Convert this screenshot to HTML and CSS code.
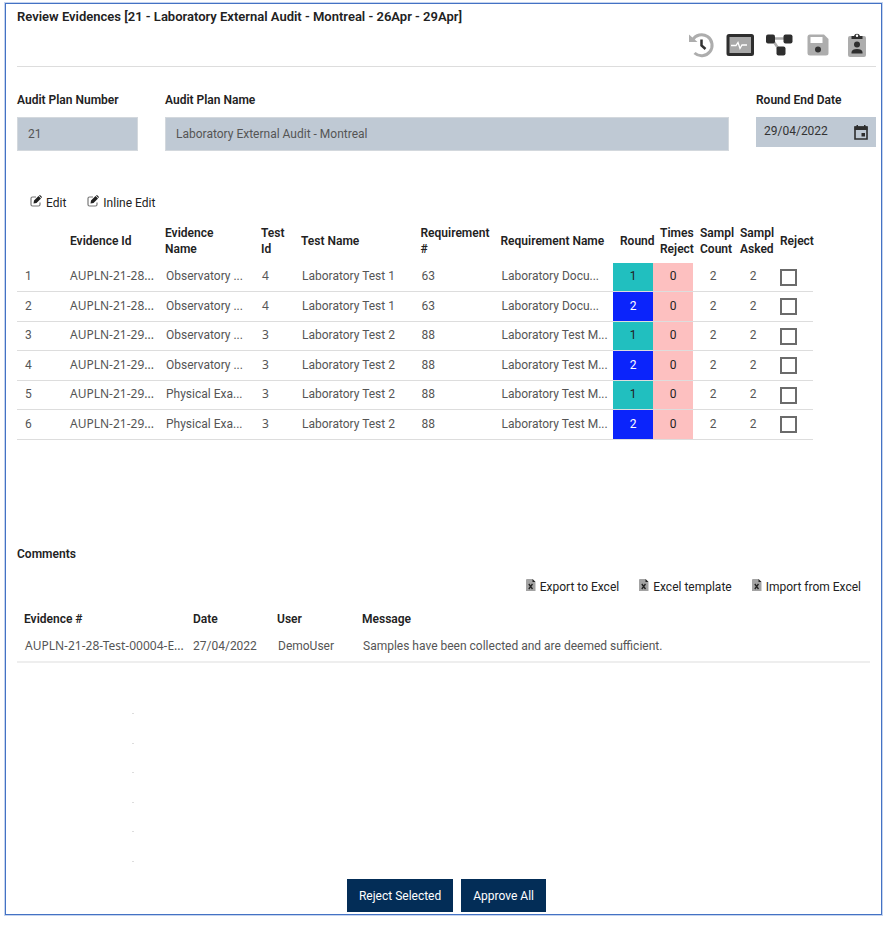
FILE: index.html
```
<!DOCTYPE html>
<html lang="en">
<head>
  <meta charset="UTF-8" />
  <meta name="viewport" content="width=device-width, initial-scale=1" />
  <title>Review Evidences</title>
  <link rel="stylesheet" href="styles.css">
</head>
<body>

  <!-- Shared icons -->
  <svg class="sprite" aria-hidden="true">
    <symbol id="icon-edit" viewBox="0 0 12 12">
      <path d="M6 2H2.5Q1 2 1 3.500V9.500Q1 11 2.500 11H8.500Q10 11 10 9.500V7.500" fill="none" stroke="#777" stroke-width="1.200" />
      <path d="M3.500 8.500L4 5.500L8.500 1L11 3.500L6.500 8Z M9 .5L10 0L12 2L11.500 3Z" fill="#222" />
    </symbol>
    <symbol id="icon-excel" viewBox="0 0 10 12">
      <path d="M1 0H6.500L9.500 3V12H0V1Q0 0 1 0Z" fill="#a3a3a3" />
      <path d="M6.500 0L9.500 3H6.500Z" fill="#222" />
      <path d="M2.800 5L6.500 10M6.500 5L2.800 10" stroke="#222" stroke-width="1.300" />
    </symbol>
  </svg>

  <main class="page">
    <header class="page-header">
      <h1>Review Evidences [21 - Laboratory External Audit - Montreal - 26Apr - 29Apr]</h1>
      <div class="header-actions">
        <button type="button" aria-label="History">
          <svg viewBox="0 0 28 28">
            <path d="M5.500 9A10.500 10.500 0 1 1 7.500 22" fill="none" stroke="#adadad" stroke-width="3" />
            <path d="M2 3.500V11H10.500Z" fill="#adadad" />
            <path d="M14.500 8.500V14.500L18.500 18" fill="none" stroke="#333" stroke-width="2.500" />
          </svg>
        </button>
        <button type="button" aria-label="Monitor">
          <svg viewBox="0 0 28 28">
            <rect x="2" y="4.500" width="24.500" height="19" rx="1" fill="#a8a8a8" stroke="#2e2e2e" stroke-width="3" />
            <path d="M5 14.500H10L12 11.500L14 17.500L16 14H21" fill="none" stroke="#fff" stroke-width="1.300" />
          </svg>
        </button>
        <button type="button" aria-label="Workflow">
          <svg viewBox="0 0 28 28">
            <path d="M5 7.500H23M7 8L15 20" fill="none" stroke="#adadad" stroke-width="2.500" />
            <rect x="1" y="3.500" width="9" height="9" rx="2" fill="#2e2e2e" />
            <rect x="18.500" y="3.500" width="9" height="9" rx="2" fill="#2e2e2e" />
            <rect x="11.500" y="15.500" width="9" height="9" rx="2" fill="#2e2e2e" />
          </svg>
        </button>
        <button type="button" aria-label="Save">
          <svg viewBox="0 0 28 28">
            <path d="M6 3.500H20L24.500 8V22Q24.500 24.500 22 24.500H6Q3.500 24.500 3.500 22V6Q3.500 3.500 6 3.500Z" fill="#adadad" />
            <rect x="6.500" y="6" width="12" height="6" fill="#fff" />
            <circle cx="14" cy="18.500" r="3" fill="#333" />
          </svg>
        </button>
        <button type="button" aria-label="Assignment">
          <svg viewBox="0 0 28 28">
            <rect x="5" y="5" width="18" height="21" rx="2" fill="#adadad" />
            <path d="M8.500 8V5H11A3.100 3.100 0 0 1 17 5H19.500V8Z" fill="#2e2e2e" />
            <circle cx="14" cy="4.700" r="1.200" fill="#fff" />
            <circle cx="14" cy="13.500" r="3" fill="#2e2e2e" />
            <path d="M8.500 22.500V21Q9 18 14 18T19.500 21V22.500Z" fill="#2e2e2e" />
          </svg>
        </button>
      </div>
    </header>

    <form class="plan-form">
      <div class="form-group">
        <label for="plan-number">Audit Plan Number</label>
        <input type="text" id="plan-number" value="21" readonly />
      </div>
      <div class="form-group">
        <label for="plan-name">Audit Plan Name</label>
        <input type="text" id="plan-name" value="Laboratory External Audit - Montreal" readonly />
      </div>
      <div class="form-group">
        <label for="end-date">Round End Date</label>
        <div class="date-field">
          <input type="text" id="end-date" value="29/04/2022" readonly />
          <svg viewBox="0 0 14 15">
            <path d="M1 2H13V14H1Z" fill="none" stroke="#2e2e2e" stroke-width="1.600" />
            <path d="M.5 1.500H13.500V5H.5Z M2.500 0H4V2H2.500Z M10 0H11.500V2H10Z M7.500 8H11V11.500H7.500Z" fill="#2e2e2e" />
          </svg>
        </div>
      </div>
    </form>

    <div class="toolbar">
      <button type="button"><svg viewBox="0 0 12 12"><use href="#icon-edit" /></svg>Edit</button>
      <button type="button"><svg viewBox="0 0 12 12"><use href="#icon-edit" /></svg>Inline Edit</button>
    </div>

    <div class="evidence-list">
      <table class="evidences">
        <colgroup>
          <col class="col-index"><col class="col-evidence"><col class="col-evidence"><col class="col-small"><col><col class="col-req"><col>
          <col class="col-small"><col class="col-small"><col class="col-small"><col class="col-small"><col class="col-small">
        </colgroup>
        <thead>
          <tr>
            <th></th>
            <th>Evidence Id</th>
            <th>Evidence<br>Name</th>
            <th>Test<br>Id</th>
            <th>Test Name</th>
            <th>Requirement<br>#</th>
            <th>Requirement Name</th>
            <th>Round</th>
            <th>Times<br>Reject</th>
            <th>Sampl<br>Count</th>
            <th>Sampl<br>Asked</th>
            <th>Reject</th>
          </tr>
        </thead>
        <tbody>
          <tr><td>1</td><td class="code">AUPLN-21-28...</td><td>Observatory ...</td><td class="code">4</td><td>Laboratory Test 1</td><td>63</td><td>Laboratory Docu...</td><td class="round-1">1</td><td class="rejected">0</td><td class="num">2</td><td class="num">2</td><td class="check"><input type="checkbox" aria-label="Reject row 1" /></td></tr>
          <tr><td>2</td><td class="code">AUPLN-21-28...</td><td>Observatory ...</td><td class="code">4</td><td>Laboratory Test 1</td><td>63</td><td>Laboratory Docu...</td><td class="round-2">2</td><td class="rejected">0</td><td class="num">2</td><td class="num">2</td><td class="check"><input type="checkbox" aria-label="Reject row 2" /></td></tr>
          <tr><td>3</td><td class="code">AUPLN-21-29...</td><td>Observatory ...</td><td class="code">3</td><td>Laboratory Test 2</td><td>88</td><td>Laboratory Test M...</td><td class="round-1">1</td><td class="rejected">0</td><td class="num">2</td><td class="num">2</td><td class="check"><input type="checkbox" aria-label="Reject row 3" /></td></tr>
          <tr><td>4</td><td class="code">AUPLN-21-29...</td><td>Observatory ...</td><td class="code">3</td><td>Laboratory Test 2</td><td>88</td><td>Laboratory Test M...</td><td class="round-2">2</td><td class="rejected">0</td><td class="num">2</td><td class="num">2</td><td class="check"><input type="checkbox" aria-label="Reject row 4" /></td></tr>
          <tr><td>5</td><td class="code">AUPLN-21-29...</td><td>Physical Exa...</td><td class="code">3</td><td>Laboratory Test 2</td><td>88</td><td>Laboratory Test M...</td><td class="round-1">1</td><td class="rejected">0</td><td class="num">2</td><td class="num">2</td><td class="check"><input type="checkbox" aria-label="Reject row 5" /></td></tr>
          <tr><td>6</td><td class="code">AUPLN-21-29...</td><td>Physical Exa...</td><td class="code">3</td><td>Laboratory Test 2</td><td>88</td><td>Laboratory Test M...</td><td class="round-2">2</td><td class="rejected">0</td><td class="num">2</td><td class="num">2</td><td class="check"><input type="checkbox" aria-label="Reject row 6" /></td></tr>
        </tbody>
      </table>
    </div>

    <section class="comments">
      <h2>Comments</h2>
      <div class="toolbar toolbar-right">
        <button type="button"><svg viewBox="0 0 10 12"><use href="#icon-excel" /></svg>Export to Excel</button>
        <button type="button"><svg viewBox="0 0 10 12"><use href="#icon-excel" /></svg>Excel template</button>
        <button type="button"><svg viewBox="0 0 10 12"><use href="#icon-excel" /></svg>Import from Excel</button>
      </div>
      <table class="comment-table">
        <colgroup><col class="col-ref"><col class="col-meta"><col class="col-meta"><col></colgroup>
        <thead>
          <tr><th>Evidence #</th><th>Date</th><th>User</th><th>Message</th></tr>
        </thead>
        <tbody>
          <tr><td class="code">AUPLN-21-28-Test-00004-E...</td><td>27/04/2022</td><td>DemoUser</td><td>Samples have been collected and are deemed sufficient.</td></tr>
        </tbody>
      </table>
      <ul class="empty-rows" aria-hidden="true">
        <li></li><li></li><li></li><li></li><li></li><li></li>
      </ul>
    </section>

    <footer class="page-footer">
      <button type="button" class="btn">Reject Selected</button>
      <button type="button" class="btn">Approve All</button>
    </footer>
  </main>

</body>
</html>
```
FILE: styles.css
```
* {
  box-sizing: border-box;
}

body {
  margin: 0;
  padding: 3px 12px 11px 5px;
  background: #fff;
  color: #222;
  font-family: Roboto, sans-serif;
  font-size: 12px;
  line-height: 16px;
}

button,
input {
  font: inherit;
  color: inherit;
}

button {
  padding: 0;
  border: none;
  background: none;
  cursor: pointer;
}

.sprite {
  position: absolute;
  width: 0;
  height: 0;
}

.page {
  display: flex;
  flex-direction: column;
  min-height: calc(100vh - 14px);
  padding: 0 5px 2px 11px;
  border: 1px solid #4472c4;
  box-shadow: 0 0 0 1px #c5d4ee;
}

/* Header */
.page-header {
  padding-top: 5px;
  border-bottom: 1px solid #ddd;
}

h1,
h2 {
  margin: 0;
  font-size: 12px;
  font-weight: 600;
}

h1 {
  font-size: 13px;
}

.header-actions {
  display: flex;
  justify-content: flex-end;
  gap: 11px;
  padding: 6px 5px 7px 0;
}

.header-actions button,
.header-actions svg {
  display: block;
  width: 28px;
  height: 28px;
}

/* Plan details */
.plan-form {
  display: grid;
  grid-template-columns: 121px 1fr 120px;
  gap: 27px;
  padding-top: 25px;
}

label {
  display: block;
  margin-bottom: 9px;
  font-weight: 600;
}

.form-group input {
  display: block;
  width: 100%;
  height: 34px;
  padding: 0 10px;
  border: 1px solid #d3d8dd;
  border-radius: 0;
  background: #bfc9d4;
  color: #555;
  outline: none;
}

.date-field {
  display: flex;
  align-items: center;
  padding-right: 8px;
  background: #bfc9d4;
}

.date-field input {
  flex: 1;
  min-width: 0;
  height: 30px;
  padding: 0 8px 2px;
  border: none;
  color: #333;
}

.date-field svg {
  width: 14px;
  height: 15px;
}

/* Toolbars */
.toolbar {
  display: flex;
  gap: 21px;
  padding: 44px 13px 0;
}

.toolbar button {
  display: flex;
  align-items: center;
  gap: 4px;
}

.toolbar svg {
  width: 12px;
  height: 12px;
  margin-bottom: 4px;
}

.toolbar-right {
  justify-content: flex-end;
  gap: 20px;
  padding: 17px 15px 0;
}

.toolbar-right svg {
  width: 10px;
}

/* Tables */
table {
  width: 100%;
  table-layout: fixed;
  border-collapse: separate;
  border-spacing: 0;
}

th,
td {
  padding: 0 0 0 8px;
  text-align: left;
  white-space: nowrap;
}

th {
  padding-left: 7px;
  font-weight: 600;
}

th:nth-child(2),
td:nth-child(3) {
  padding-left: 8px;
}

td {
  height: 29px;
  padding-bottom: 2px;
  border-bottom: 1px solid #ddd;
  color: #555;
}

.evidence-list {
  margin-right: 63px;
}

.evidences th {
  height: 52px;
  padding-top: 8px;
}

.evidences tr:nth-child(even) td {
  height: 30px;
}

.col-index { width: 45px; }
.col-evidence { width: 96px; }
.col-req { width: 80px; }
.col-small { width: 40px; }
.col-ref { width: 168px; }
.col-meta { width: 85px; }

.code {
  font-family: "Noto Sans", sans-serif;
}

.round-1,
.round-2,
.rejected,
.num {
  padding: 0 0 2px;
  text-align: center;
}

.round-1 {
  background: #21bfbf;
  color: #222;
}

.round-2 {
  background: #0b24fb;
  color: #fff;
}

.rejected {
  background: #fdc0c0;
  color: #222;
}

.check {
  padding: 0 0 0 7px;
}

input[type="checkbox"] {
  display: block;
  width: 17px;
  height: 17px;
  margin: 0;
  border: 2px solid #6b6b6b;
  background: #fff;
  appearance: none;
}

input[type="checkbox"]:checked {
  background: #6b6b6b;
}

/* Comments */
.comments {
  padding-top: 106px;
}

.comment-table {
  width: calc(100% - 6px);
  margin-top: 10px;
}

.comment-table th {
  height: 27px;
}

.comment-table td {
  height: 31px;
  border-bottom: 2px solid #eee;
}

.empty-rows {
  margin: 50px 0 0 115px;
  padding: 0;
  list-style: none;
}

.empty-rows li {
  width: 2px;
  height: 1px;
  margin-bottom: 29px;
  background: #ddd;
}

.empty-rows li:nth-child(even) {
  margin-bottom: 28px;
}

.empty-rows li:last-child {
  margin-bottom: 0;
}

/* Footer */
.page-footer {
  display: flex;
  justify-content: center;
  gap: 8px;
  margin-top: auto;
}

.btn {
  padding: 9px 12px 8px;
  background: #032d57;
  color: #fff;
}
```
